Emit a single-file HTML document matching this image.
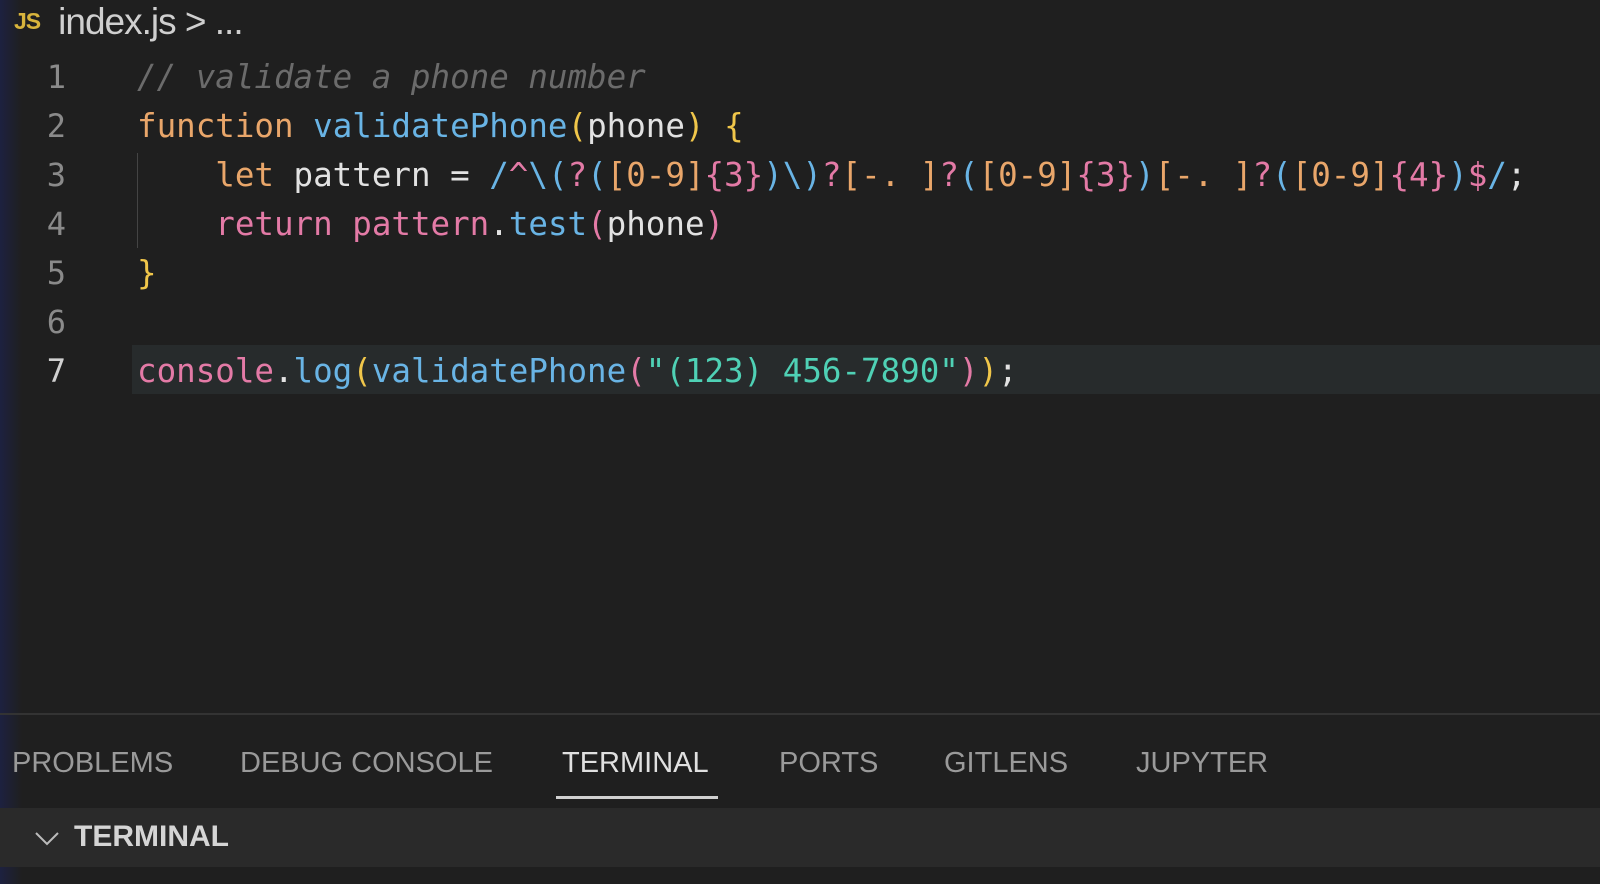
<!DOCTYPE html>
<html><head><meta charset="utf-8"><style>
body{margin:0;width:1600px;height:884px;overflow:hidden;background:#1f1f1f;position:relative;font-family:"DejaVu Sans Mono","Liberation Mono",monospace}
.edge{position:absolute;left:0;top:0;width:22px;height:884px;background:linear-gradient(90deg,#1d2140,#1f1f1f)}
.crumb{position:absolute;left:14px;top:1px;font-family:"Liberation Sans",sans-serif;font-size:37px;color:#cfcfcf;letter-spacing:-1px}
.crumb b{color:#d8b43c;font-size:23px;font-weight:bold;margin-right:18px;letter-spacing:-1px;vertical-align:5px}
.ln{position:absolute;left:30px;width:36px;text-align:right;font-size:32px;color:#8a8a8a;line-height:49px}
.code{position:absolute;left:137px;font-size:32.5px;white-space:pre;color:#e2e2e2;line-height:49px}
.hl{position:absolute;left:132px;top:345px;width:1468px;height:49px;background:#272b2c}
.guide{position:absolute;left:137px;top:153px;width:1px;height:95px;background:#444}
.c{color:#6b6b6b;font-style:italic}.o{color:#e9a66a}.b{color:#69b4e5}.y{color:#f0c64a}.p{color:#e37aa6}.t{color:#4fd1b5}
.div{position:absolute;left:0;top:713px;width:1600px;height:2px;background:#333}
.tabs{position:absolute;top:747px;left:12px;font-family:"Liberation Sans",sans-serif;font-size:29px;color:#9a9a9a}
.tabs span{position:absolute;white-space:nowrap}
.ul{position:absolute;left:556px;top:796px;width:162px;height:3px;background:#d0d0d0}
.th{position:absolute;left:0;top:808px;width:1600px;height:59px;background:#2a2a2a}
.th span{position:absolute;left:74px;top:12px;font-family:"Liberation Sans",sans-serif;font-weight:bold;font-size:30px;color:#d5d5d5}
</style></head><body>
<div class="edge"></div>
<div class="crumb"><b>JS</b>index.js &gt; ...</div>
<div class="hl"></div>
<div class="guide"></div>
<div class="ln" style="top:53px">1</div>
<div class="ln" style="top:102px">2</div>
<div class="ln" style="top:151px">3</div>
<div class="ln" style="top:200px">4</div>
<div class="ln" style="top:249px">5</div>
<div class="ln" style="top:298px">6</div>
<div class="ln" style="top:347px;color:#d0d0d0">7</div>
<div class="code" style="top:53px"><span class="c">// validate a phone number</span>
<span class="o">function</span> <span class="b">validatePhone</span><span class="y">(</span>phone<span class="y">)</span> <span class="y">{</span>
    <span class="o">let</span> pattern = <span class="b">/</span><span class="p">^</span><span class="b">\(</span><span class="p">?</span><span class="b">(</span><span class="o">[0-9]</span><span class="p">{3}</span><span class="b">)\)</span><span class="p">?</span><span class="o">[-. ]</span><span class="p">?</span><span class="b">(</span><span class="o">[0-9]</span><span class="p">{3}</span><span class="b">)</span><span class="o">[-. ]</span><span class="p">?</span><span class="b">(</span><span class="o">[0-9]</span><span class="p">{4}</span><span class="b">)</span><span class="p">$</span><span class="b">/</span>;
    <span class="p">return</span> <span class="p">pattern</span>.<span class="b">test</span><span class="p">(</span>phone<span class="p">)</span>
<span class="y">}</span>

<span class="p">console</span>.<span class="b">log</span><span class="y">(</span><span class="b">validatePhone</span><span class="p">(</span><span class="t">"(123) 456-7890"</span><span class="p">)</span><span class="y">)</span>;</div>
<div class="div"></div>
<div class="tabs">
<span style="left:0">PROBLEMS</span>
<span style="left:228px">DEBUG CONSOLE</span>
<span style="left:550px;color:#e0e0e0">TERMINAL</span>
<span style="left:767px">PORTS</span>
<span style="left:932px">GITLENS</span>
<span style="left:1124px">JUPYTER</span>
</div>
<div class="ul"></div>
<div class="th"><svg style="position:absolute;left:34px;top:23px" width="26" height="15"><path d="M2 2 L13 13 L24 2" stroke="#bbb" stroke-width="2" fill="none"/></svg><span>TERMINAL</span></div>
</body></html>
